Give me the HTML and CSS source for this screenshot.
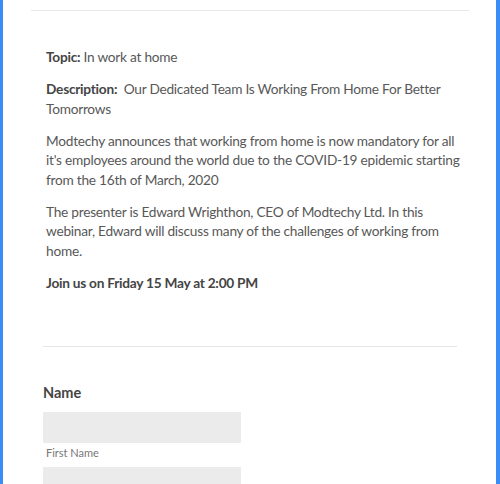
FILE: index.html
```html
<!DOCTYPE html>
<html>
<head>
<meta charset="utf-8">
<link rel="stylesheet" href="styles.css">
</head>
<body>
<div class="card">
  <div class="topline"></div>
  <div class="content">
    <p><b>Topic:</b> In work at home</p>
    <p><b>Description:</b>&nbsp; Our Dedicated Team Is Working From Home For Better Tomorrows</p>
    <p>Modtechy announces that working from home is now mandatory for all it's employees around the world due to the COVID-19 epidemic starting from the 16th of March, 2020</p>
    <p>The presenter is Edward Wrighthon, CEO of Modtechy Ltd. In this webinar, Edward will discuss many of the challenges of working from home.</p>
    <p class="join">Join us on Friday 15 May at 2:00 PM</p>
  </div>
  <div class="divider"></div>
  <form class="form">
    <div class="label">Name</div>
    <div class="field">
      <input class="input" type="text">
      <div class="sublabel">First Name</div>
    </div>
    <div class="field">
      <input class="input" type="text">
      <div class="sublabel">Last Name</div>
    </div>
  </form>
</div>
</body>
</html>
```

FILE: styles.css
```css
html, body {
  margin: 0;
  padding: 0;
  background: #3a8cf7;
  height: 484px;
  overflow: hidden;
}
.card {
  background: #ffffff;
  margin: 0 4px 0 3px;
  min-height: 484px;
  padding-top: 10px;
  font-family: Lato, "Noto Sans", sans-serif;
  color: #585858;
  font-size: 13.7px;
  letter-spacing: -0.25px;
}
.topline {
  margin: 0 27px 0 28px;
  border-top: 1px solid #e9e9e9;
}
.content {
  padding: 36px 36px 0 43px;
}
.content p {
  margin: 0 0 12.5px 0;
  line-height: 19.5px;
}
.content b, .join {
  font-weight: 700;
  color: #454545;
}
.divider {
  margin: 54px 39px 0 40px;
  border-top: 1px solid #e6e6e6;
}
.form {
  padding: 36px 0 0 40px;
  margin: 0;
}
.label {
  font-size: 14.5px;
  font-weight: 700;
  color: #444;
  line-height: 20px;
  margin-bottom: 9px;
  letter-spacing: 0;
}
.field {
  margin-bottom: 8px;
}
.input {
  display: block;
  box-sizing: border-box;
  width: 198px;
  height: 31px;
  border: none;
  background: #ebebeb;
  margin: 0;
  padding: 0;
}
.sublabel {
  font-size: 11px;
  color: #777;
  margin: 3px 0 0 3px;
  line-height: 13px;
  letter-spacing: 0;
}
```
